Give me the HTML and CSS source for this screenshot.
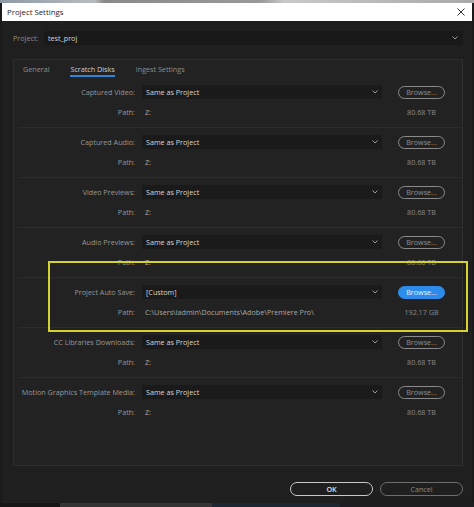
FILE: index.html
```html
<!DOCTYPE html>
<html>
<head>
<meta charset="utf-8">
<link rel="stylesheet" href="styles.css">
</head>
<body>
<div class="top-strip"></div>
<div class="titlebar">
  <span class="title">Project Settings</span>
  <svg class="close" width="8" height="8" viewBox="0 0 8 8"><path d="M0.5 0.5 L7.5 7.5 M7.5 0.5 L0.5 7.5" stroke="#333" stroke-width="1" fill="none"/></svg>
</div>
<div class="dialog">
  <div class="project-row">
    <span class="project-label">Project:</span>
    <div class="field project-field"><span>test_proj</span><svg class="chev" width="6" height="4" viewBox="0 0 6 4"><path d="M0.5 0.5 L3 3 L5.5 0.5" stroke="#9a9a9a" stroke-width="1" fill="none"/></svg></div>
  </div>
  <div class="panel">
    <div class="tabs">
      <span class="tab">General</span>
      <span class="tab active">Scratch Disks</span>
      <span class="tab">Ingest Settings</span>
    </div>
    <div class="groups">
      <div class="group">
        <span class="label">Captured Video:</span>
        <div class="field"><span>Same as Project</span><svg class="chev" width="6" height="4" viewBox="0 0 6 4"><path d="M0.5 0.5 L3 3 L5.5 0.5" stroke="#9a9a9a" stroke-width="1" fill="none"/></svg></div>
        <span class="btn">Browse...</span>
        <span class="label">Path:</span>
        <span class="path">Z:</span>
        <span class="size">80.68 TB</span>
      </div>
      <div class="group">
        <span class="label">Captured Audio:</span>
        <div class="field"><span>Same as Project</span><svg class="chev" width="6" height="4" viewBox="0 0 6 4"><path d="M0.5 0.5 L3 3 L5.5 0.5" stroke="#9a9a9a" stroke-width="1" fill="none"/></svg></div>
        <span class="btn">Browse...</span>
        <span class="label">Path:</span>
        <span class="path">Z:</span>
        <span class="size">80.68 TB</span>
      </div>
      <div class="group">
        <span class="label">Video Previews:</span>
        <div class="field"><span>Same as Project</span><svg class="chev" width="6" height="4" viewBox="0 0 6 4"><path d="M0.5 0.5 L3 3 L5.5 0.5" stroke="#9a9a9a" stroke-width="1" fill="none"/></svg></div>
        <span class="btn">Browse...</span>
        <span class="label">Path:</span>
        <span class="path">Z:</span>
        <span class="size">80.68 TB</span>
      </div>
      <div class="group">
        <span class="label">Audio Previews:</span>
        <div class="field"><span>Same as Project</span><svg class="chev" width="6" height="4" viewBox="0 0 6 4"><path d="M0.5 0.5 L3 3 L5.5 0.5" stroke="#9a9a9a" stroke-width="1" fill="none"/></svg></div>
        <span class="btn">Browse...</span>
        <span class="label">Path:</span>
        <span class="path">Z:</span>
        <span class="size">80.68 TB</span>
      </div>
      <div class="group">
        <span class="label">Project Auto Save:</span>
        <div class="field"><span>[Custom]</span><svg class="chev" width="6" height="4" viewBox="0 0 6 4"><path d="M0.5 0.5 L3 3 L5.5 0.5" stroke="#9a9a9a" stroke-width="1" fill="none"/></svg></div>
        <span class="btn primary">Browse...</span>
        <span class="label">Path:</span>
        <span class="path">C:\Users\ladmin\Documents\Adobe\Premiere Pro\</span>
        <span class="size">192.17 GB</span>
      </div>
      <div class="group">
        <span class="label">CC Libraries Downloads:</span>
        <div class="field"><span>Same as Project</span><svg class="chev" width="6" height="4" viewBox="0 0 6 4"><path d="M0.5 0.5 L3 3 L5.5 0.5" stroke="#9a9a9a" stroke-width="1" fill="none"/></svg></div>
        <span class="btn">Browse...</span>
        <span class="label">Path:</span>
        <span class="path">Z:</span>
        <span class="size">80.68 TB</span>
      </div>
      <div class="group">
        <span class="label">Motion Graphics Template Media:</span>
        <div class="field"><span>Same as Project</span><svg class="chev" width="6" height="4" viewBox="0 0 6 4"><path d="M0.5 0.5 L3 3 L5.5 0.5" stroke="#9a9a9a" stroke-width="1" fill="none"/></svg></div>
        <span class="btn">Browse...</span>
        <span class="label">Path:</span>
        <span class="path">Z:</span>
        <span class="size">80.68 TB</span>
      </div>
    </div>
  </div>
  <div class="footer">
    <span class="fbtn ok">OK</span>
    <span class="fbtn cancel">Cancel</span>
  </div>
</div>
<div class="bottom-strip">
  <span class="seg s1"></span><span class="seg s2"></span><span class="seg s3"></span><span class="seg s4"></span>
</div>
<div class="highlight"></div>
</body>
</html>
```
FILE: styles.css
```css
* { box-sizing: border-box; }
html, body { margin: 0; padding: 0; }
body {
  width: 474px;
  height: 507px;
  overflow: hidden;
  background: #1a1a1a;
  font-family: "Open Sans", "Noto Sans", sans-serif;
  position: relative;
}
.top-strip {
  height: 3px;
  background: linear-gradient(90deg, #8d9aa6 0, #b8bcc0 20%, #8a8a8a 22%, #999 55%, #c9c9c9 60%, #a9a9a9 100%);
}
.titlebar {
  height: 18px;
  margin: 0 2px;
  background: #ffffff;
  display: flex;
  align-items: center;
  justify-content: space-between;
  padding: 0 7px 0 5px;
}
.title {
  font-family: "Open Sans", sans-serif;
  font-size: 7.8px;
  color: #222;
}
.close { display: block; }
.dialog {
  height: 482px;
  margin: 0 2px;
  background: #1f1f1f;
  padding: 10px 9px 0 11px;
}
.project-row {
  display: flex;
  align-items: center;
  height: 14px;
}
.project-label {
  width: 31px;
  font-size: 7.2px;
  color: #8c8c8c;
}
.field {
  height: 14px;
  background: #1a1a1a;
  display: flex;
  align-items: center;
  justify-content: space-between;
  padding: 0 4px 0 4px;
  font-size: 7.2px;
  color: #d6d6d6;
}
.project-field { flex: 1; padding-right: 5px; background: #191919; }
.chev { display: block; }
.panel {
  margin-top: 14px;
  height: 407px;
  background: #222222;
  border: 1px solid #2d2d2d;
  border-right-color: #303030;
}
.tabs {
  display: flex;
  gap: 21px;
  padding: 4px 0 0 9px;
  height: 18px;
}
.tab {
  font-size: 7.2px;
  line-height: 10px;
  color: #8e8e8e;
  padding-bottom: 1px;
  border-bottom: 2px solid transparent;
  height: 13px;
}
.tab.active {
  color: #d0d0d0;
  border-bottom-color: #2f86d8;
}
.groups {
  display: flex;
  flex-direction: column;
}
.group {
  margin-left: 4px;
  padding: 7px 8px 8px 0;
  border-bottom: 1px solid #2c2c2c;
  display: grid;
  grid-template-columns: 117px 240px 56px;
  column-gap: 7px;
  row-gap: 6px;
  grid-template-rows: 14px 14px;
  align-items: center;
}
.group > .btn, .group > .size { margin-left: 9px; }
.group:last-child { border-bottom: none; }
.label {
  text-align: right;
  font-size: 7.2px;
  color: #979797;
  white-space: nowrap;
}
.path {
  font-size: 7.2px;
  color: #a8a8a8;
  padding-left: 3px;
  white-space: nowrap;
}
.size {
  font-size: 7.2px;
  color: #8a8a8a;
  text-align: center;
}
.btn {
  height: 13px;
  border: 1px solid #8a8a8a;
  border-radius: 7px;
  font-size: 7.2px;
  color: #8f8f8f;
  display: flex;
  align-items: center;
  justify-content: center;
}
.btn.primary {
  background: #2d8ceb;
  border-color: #2d8ceb;
  color: #e8f2ff;
}
.footer {
  display: flex;
  justify-content: flex-end;
  gap: 7px;
  margin-top: 16px;
}
.fbtn {
  width: 83px;
  height: 14px;
  border-radius: 7px;
  font-size: 7.2px;
  display: flex;
  align-items: center;
  justify-content: center;
}
.fbtn.ok {
  border: 1.5px solid #c8c8c8;
  color: #e0e0e0;
  font-weight: 600;
}
.fbtn.cancel {
  border: 1.5px solid #6e6e6e;
  color: #8a8a8a;
}
.bottom-strip {
  height: 4px;
  display: flex;
}
.seg { display: block; height: 4px; }
.s1 { width: 60px; background: #161616; }
.s2 { width: 152px; background: #353535; }
.s3 { width: 128px; background: #1d2731; }
.s4 { flex: 1; background: #1e1e22; }
.highlight {
  position: absolute;
  left: 48px;
  top: 261px;
  width: 420px;
  height: 71px;
  border: 2px solid #d3d232;
}
```
